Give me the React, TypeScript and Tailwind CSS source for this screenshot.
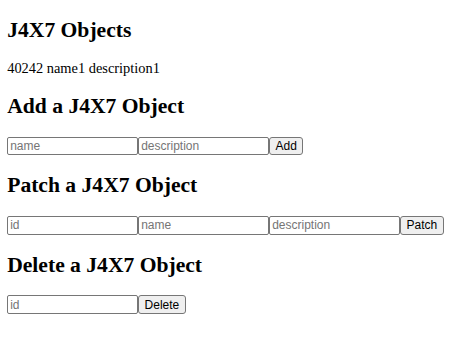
import React from "react";

const inputCls =
  "box-border w-[131px] h-[18.5px] border border-[#767676] rounded-[2px] px-[2px] py-0 text-[12px] leading-none text-black placeholder:text-[#757575] bg-white outline-none [font-family:'Liberation_Sans',Arial,sans-serif]";
const btnCls =
  "box-border h-[18.5px] border border-[#767676] rounded-[3px] bg-[#efefef] px-[5.4px] py-0 text-[12px] leading-none text-black [font-family:'Liberation_Sans',Arial,sans-serif]";
const h2Cls =
  "my-[17.9px] text-[21.6px] leading-[1.16] font-bold text-black [font-family:'Liberation_Serif','Times_New_Roman',serif]";

export default function App() {
  return (
    <div className="px-[7.2px] bg-white text-black [font-family:'Liberation_Serif','Times_New_Roman',serif]">
      <h2 className={h2Cls}>J4X7 Objects</h2>
      <p className="my-[14.4px] text-[14.4px] leading-[1.05]">40242 name1 description1</p>
      <h2 className={h2Cls}>Add a J4X7 Object</h2>
      <div className="flex">
        <input className={inputCls} placeholder="name" />
        <input className={inputCls} placeholder="description" />
        <button className={btnCls}>Add</button>
      </div>
      <h2 className={h2Cls}>Patch a J4X7 Object</h2>
      <div className="flex">
        <input className={inputCls} placeholder="id" />
        <input className={inputCls} placeholder="name" />
        <input className={inputCls} placeholder="description" />
        <button className={btnCls}>Patch</button>
      </div>
      <h2 className={h2Cls}>Delete a J4X7 Object</h2>
      <div className="flex">
        <input className={inputCls} placeholder="id" />
        <button className={btnCls}>Delete</button>
      </div>
    </div>
  );
}
